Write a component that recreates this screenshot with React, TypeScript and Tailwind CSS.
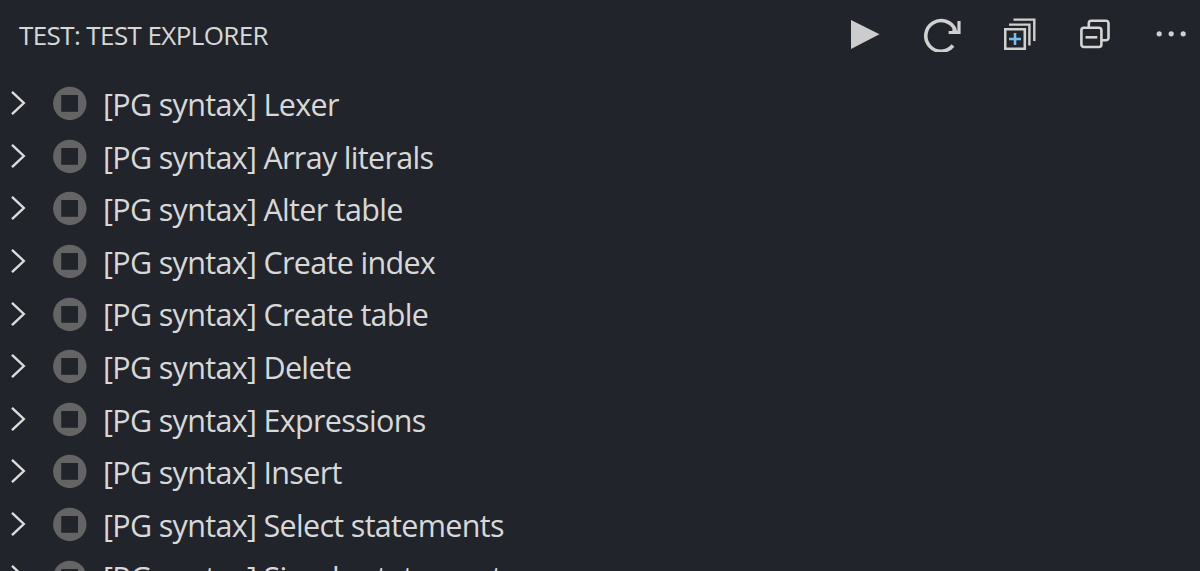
const TESTS = [
  'Lexer',
  'Array literals',
  'Alter table',
  'Create index',
  'Create table',
  'Delete',
  'Expressions',
  'Insert',
  'Select statements',
  'Simple statements',
]

function PlayIcon() {
  return (
    <svg width="30" height="30" viewBox="0 0 30 30" fill="#cccccc">
      <path d="M1 1 29.5 15.3 1 30Z" />
    </svg>
  )
}

function ReloadIcon() {
  return (
    <svg width="38" height="36" viewBox="0 0 38 36" fill="none" stroke="#d0d0d0" strokeWidth="3.6">
      <path d="M29 29.5A15.3 15.3 0 1 1 31.2 14" />
      <path d="M24.6 16.5H35V5" strokeWidth="3.2" />
      <path d="M29 11 34 15V16.5H28Z" fill="#d0d0d0" stroke="none" />
    </svg>
  )
}

function ExpandIcon() {
  return (
    <svg width="32" height="32" viewBox="0 0 32 32" fill="none" stroke="#d0d0cc" strokeWidth="2.4">
      <path d="M1.2 11.2H20.8V30.8H1.2Z" strokeWidth="2.6" />
      <path d="M5 6.6H25.4V27.5" />
      <path d="M9.5 1.6H30.3V23" />
      <path d="M5 21H17M11 15V27" stroke="#75beed" strokeWidth="2.6" />
    </svg>
  )
}

function CollapseIcon() {
  return (
    <svg width="30" height="30" viewBox="0 0 30 30" fill="none" stroke="#d4d4d4" strokeWidth="2.6">
      <rect x="1.4" y="8.8" width="20" height="19.2" rx="2.5" />
      <path d="M8.8 8.5V4.2A2.5 2.5 0 0 1 11.3 1.7H26A2.5 2.5 0 0 1 28.5 4.2V18.7A2.5 2.5 0 0 1 26 21.2H21.4" />
      <path d="M5.5 18.3H17.3" strokeWidth="2.6" />
    </svg>
  )
}

function MoreIcon() {
  return (
    <svg width="30" height="6" viewBox="0 0 30 6" fill="#d0d0d0">
      <circle cx="3.2" cy="2.8" r="2.6" />
      <circle cx="15.2" cy="2.8" r="2.6" />
      <circle cx="27.2" cy="2.8" r="2.6" />
    </svg>
  )
}

interface TestRowProps {
  name: string
}

function TestRow({ name }: TestRowProps) {
  return (
    <li className="flex h-[52.6px] shrink-0 items-center pl-[11px]">
      <svg className="mr-[27px] shrink-0" width="15" height="26" viewBox="0 0 15 26" fill="none" stroke="#dcdcdc" strokeWidth="2.4">
        <path d="M1 1.8 12.8 13 1 24.2" />
      </svg>
      <svg className="mr-4 shrink-0" width="34" height="34" viewBox="0 0 34 34">
        <circle cx="16.8" cy="17.4" r="16.7" fill="#646464" />
        <path d="M8.2 9H25V25.8H8.2Z" fill="#21252b" />
      </svg>
      <span className="whitespace-pre pt-[2px] text-[30.5px] leading-none tracking-[-0.68px]">[PG syntax] {name}</span>
    </li>
  )
}

export default function App() {
  return (
    <div className="flex h-[571px] w-[1200px] flex-col overflow-hidden bg-[#21252b] font-['Open_Sans',sans-serif] text-[#d8d8d8]">
      <header className="flex h-[77px] shrink-0 items-start justify-between pl-[19px] pr-[14px]">
        <h1 className="mt-[21px] whitespace-pre text-[26px] leading-[28px] tracking-[-0.6px]">TEST: TEST EXPLORER</h1>
        <div className="flex h-[68px] items-center">
          <button className="mr-[44px]"><PlayIcon /></button>
          <button className="mr-[42px]"><ReloadIcon /></button>
          <button className="mr-[44px]"><ExpandIcon /></button>
          <button className="mr-[46px]"><CollapseIcon /></button>
          <button><MoreIcon /></button>
        </div>
      </header>

      <ul className="flex flex-col">
        {TESTS.map((name) => (
          <TestRow key={name} name={name} />
        ))}
      </ul>
    </div>
  )
}
